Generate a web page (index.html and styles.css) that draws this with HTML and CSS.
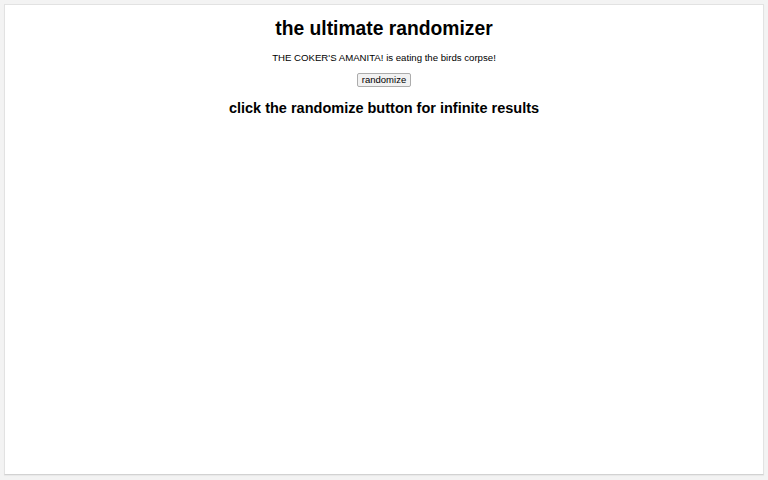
FILE: index.html
```html
<!DOCTYPE html>
<html>
<head>
<meta charset="utf-8">
<title>the ultimate randomizer</title>
<link rel="stylesheet" href="styles.css">
</head>
<body>
<main class="panel">
  <h1 class="title">the ultimate randomizer</h1>
  <p class="sentence">THE COKER'S AMANITA! is eating the birds corpse!</p>
  <button class="roll" type="button">randomize</button>
  <h2 class="hint">click the randomize button for infinite results</h2>
</main>
</body>
</html>
```
FILE: styles.css
```css
html, body {
  height: 100%;
}
body {
  margin: 0;
  padding: 4px 4px 5px 4px;
  box-sizing: border-box;
  background: #f3f3f3;
  font-family: "Liberation Sans", Arial, sans-serif;
  color: #000;
}
.panel {
  box-sizing: border-box;
  height: 100%;
  background: #fff;
  border: 1px solid #e2e2e2;
  border-bottom-color: #d2d2d2;
  box-shadow: 0 1px 1px rgba(0, 0, 0, 0.04);
  display: flex;
  flex-direction: column;
  align-items: center;
  padding-top: 13px;
}
.title {
  margin: 0;
  font-size: 19.3px;
  line-height: 22px;
  font-weight: bold;
}
.sentence {
  margin: 12px 0 0;
  font-size: 9.65px;
  line-height: 12px;
}
.roll {
  margin-top: 9px;
  font-family: "Liberation Sans", Arial, sans-serif;
  font-size: 9.5px;
  line-height: 12px;
  padding: 0 4px;
  background: #f2f2f2;
  border: 1px solid #acacac;
  border-radius: 2px;
  color: #000;
}
.hint {
  margin: 13px 0 0;
  font-size: 14.5px;
  line-height: 17px;
  font-weight: bold;
}
```
